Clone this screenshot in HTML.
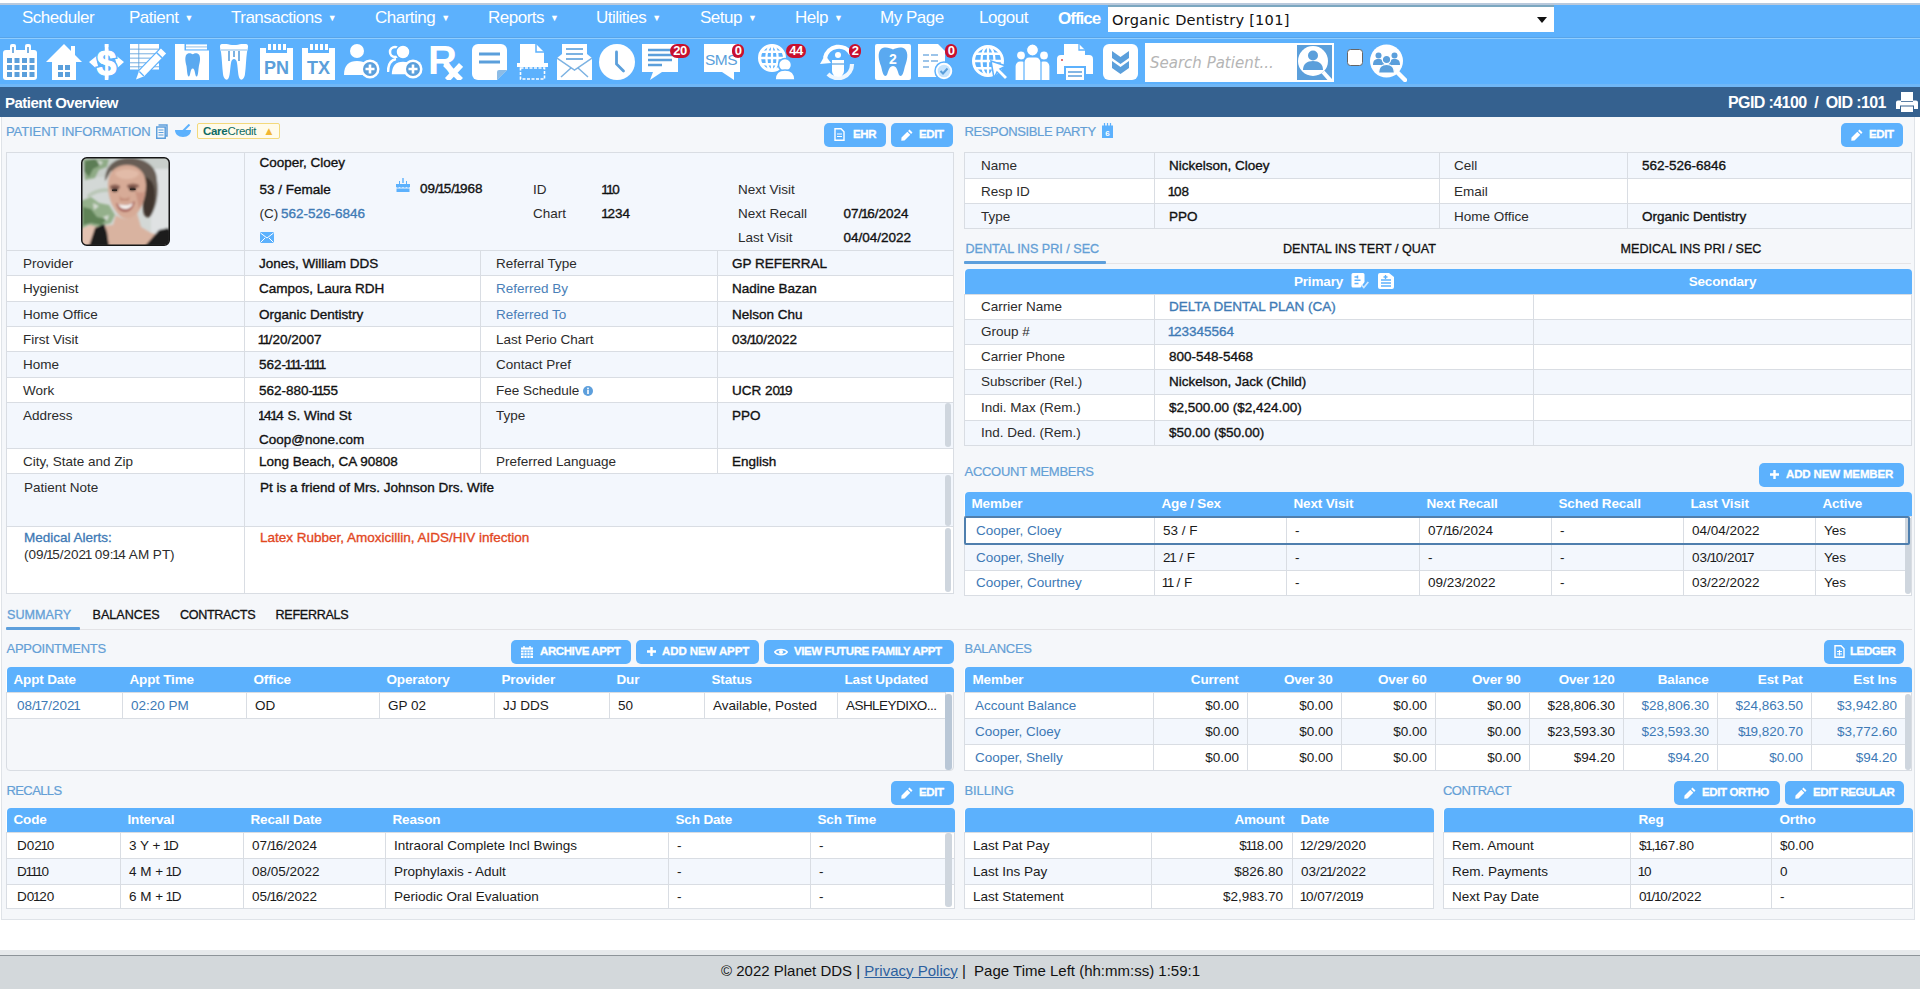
<!DOCTYPE html>
<html lang="en">
<head>
<meta charset="utf-8">
<title>Patient Overview</title>
<style>
*{box-sizing:border-box}
html,body{margin:0;padding:0}
body{width:1920px;height:989px;overflow:hidden;background:#fff;position:relative;font-family:"Liberation Sans",sans-serif;font-size:13.5px;color:#1f1f1f}
.abs{position:absolute}
#topline{left:0;top:3px;width:1920px;height:2px;background:#b9c9dc}
#menubar{left:0;top:5px;width:1920px;height:33px;background:#5cb1fd}
#menusep{left:0;top:37px;width:1920px;height:2px;background:linear-gradient(#58a4e8 0,#58a4e8 50%,#8fcdff 50%,#8fcdff 100%)}
#iconbar{left:0;top:39px;width:1920px;height:48px;background:#5cb1fd}
#iconstripe{left:0;top:84px;width:1920px;height:3px;background:#70b7f6}
#titlebar{left:0;top:87px;width:1920px;height:30px;background:#35618f}
.mi{position:absolute;top:0;height:32px;line-height:25px;font-size:17px;letter-spacing:-.5px;color:#fff;white-space:nowrap}
.mi i{font-style:normal;font-size:9px;letter-spacing:0;margin-left:6px;position:relative;top:-2px}
#office{left:1108px;top:-.5px;width:446px;height:27px;background:#fff;border-top:2px solid #7ba7c0;font-family:"DejaVu Sans",sans-serif;font-size:14.6px;letter-spacing:.22px;line-height:26px;padding-left:4px;color:#111}
#office b{position:absolute;right:7px;top:10px;width:0;height:0;border-left:5px solid transparent;border-right:5px solid transparent;border-top:6px solid #111}
.ic{position:absolute;top:6px;width:36px;height:36px}
.bdg{position:absolute;height:14px;border-radius:7px;background:#c8102e;color:#fff;font-weight:700;font-size:13px;line-height:14px;text-align:center;letter-spacing:-.5px}
#content{left:1px;top:117px;width:1914px;height:803px;background:#f5f7fa;border:1px solid #dfe3e8;border-top:0}
#footer{left:0;top:950px;width:1920px;height:39px;background:#d3d8db;border-top:5px solid #e6e9eb}
#footer .ln{position:absolute;left:0;top:0;width:1920px;height:1px;background:#8d9499}
#footer p{margin:0;position:absolute;left:721px;width:600px;top:6.5px;text-align:left;white-space:pre;font-size:15px;line-height:18px;color:#111}
#footer a{color:#2c5f9e;text-decoration:underline}
.sec{position:absolute;font-size:13px;color:#649fd6;white-space:nowrap;line-height:16px;letter-spacing:-.1px;-webkit-text-stroke:.2px}
.tab{position:absolute;font-size:12.6px;color:#111;white-space:nowrap;line-height:16px;-webkit-text-stroke:.3px}
.tab.on{color:#649fd6}
.btn{position:absolute;height:25px;border-radius:5px;background:#5cb1fd;color:#fff;-webkit-text-stroke:.3px #fff;font-weight:700;font-size:11.5px;line-height:25px;white-space:nowrap;letter-spacing:-.4px;text-align:left}
.btn svg{position:absolute;top:6px}
table{border-collapse:collapse;table-layout:fixed;position:absolute;background:#fff}
td,th{padding:0 0 0 8px;white-space:nowrap;overflow:hidden;text-align:left;font-weight:400;vertical-align:middle}
.g td{border:1px solid #d9dde3}
.g tr.a td{background:#f3f7fd}
.g tr.w td{background:#fff}
th{background:#5cb1fd;color:#fff;font-weight:700;font-size:13.5px;letter-spacing:-.15px}
.v{font-weight:400;color:#111}
.lk{color:#3d79b5}
.r{text-align:right;padding:0 5px 0 0}
.box{position:absolute;border:1px solid #d9dde3;border-radius:4px;background:#fff;overflow:hidden}
.sb{position:absolute;width:6px;border-radius:3px;background:#cfd6de}

.l{color:#2b2b2b}
td.l{padding-left:16px}
td.v{padding-left:14px}
.v{-webkit-text-stroke:.35px #111}
.lk2{color:#4a7fb8}
.lkv{color:#427cb6;-webkit-text-stroke:.35px #3d79b5}
.g{border-radius:4px}
.g tr.h th{border:0}
.pi td.l{padding-left:16px}
.am td,.ap td,.bl td,.rc td,.bi td,.ct td{color:#1a1a1a}
.g td.lk,.lk{color:#3d79b5}
.o{font-style:normal;margin:0 -1.3px}
.g tr.h th:first-child{border-radius:4px 0 0 0}.g tr.h th:last-child{border-radius:0 4px 0 0}
</style>
</head>
<body>
<div id="topline" class="abs"></div>
<div id="menubar" class="abs">
<span class="mi" style="left:22px">Scheduler</span>
<span class="mi" style="left:129px">Patient<i>▼</i></span>
<span class="mi" style="left:231px">Transactions<i>▼</i></span>
<span class="mi" style="left:375px">Charting<i>▼</i></span>
<span class="mi" style="left:488px">Reports<i>▼</i></span>
<span class="mi" style="left:596px">Utilities<i>▼</i></span>
<span class="mi" style="left:700px">Setup<i>▼</i></span>
<span class="mi" style="left:795px">Help<i>▼</i></span>
<span class="mi" style="left:880px">My Page</span>
<span class="mi" style="left:979px">Logout</span>
<span class="mi" style="left:1058px;top:1px;font-weight:700;letter-spacing:-1px">Office</span>
<div id="office" class="abs">Organic Dentistry [101]<b></b></div>
</div>
<div id="menusep" class="abs"></div>
<div id="iconbar" class="abs">
<svg class="ic" style="left:3px;top:5px;width:36px;height:36px" viewBox="0 0 36 36"><rect x="0" y="6" width="34" height="30" rx="3" fill="#fff"/><rect x="7" y="0" width="6" height="11" rx="2" fill="#fff"/><rect x="22" y="0" width="6" height="11" rx="2" fill="#fff"/><rect x="9.2" y="3" width="1.6" height="6" fill="#5b9fdb"/><rect x="24.2" y="3" width="1.6" height="6" fill="#5b9fdb"/><rect x="4.0" y="14" width="5" height="5" fill="#5b9fdb"/><rect x="11.5" y="14" width="5" height="5" fill="#5b9fdb"/><rect x="19.0" y="14" width="5" height="5" fill="#5b9fdb"/><rect x="26.5" y="14" width="5" height="5" fill="#5b9fdb"/><rect x="4.0" y="21" width="5" height="5" fill="#5b9fdb"/><rect x="11.5" y="21" width="5" height="5" fill="#5b9fdb"/><rect x="19.0" y="21" width="5" height="5" fill="#5b9fdb"/><rect x="26.5" y="21" width="5" height="5" fill="#5b9fdb"/><rect x="4.0" y="28" width="5" height="5" fill="#5b9fdb"/><rect x="11.5" y="28" width="5" height="5" fill="#5b9fdb"/><rect x="19.0" y="28" width="5" height="5" fill="#5b9fdb"/><rect x="26.5" y="28" width="5" height="5" fill="#5b9fdb"/></svg>
<svg class="ic" style="left:46px;top:5px;width:36px;height:36px" viewBox="0 0 36 36"><path fill="#fff" d="M18 0 L36 18 H30 V36 H6 V18 H0 Z M25 2 h4 v9 l-4 -4z"/><path fill="#5b9fdb" d="M12 21h5v5h-5zM19 21h5v5h-5zM12 28h5v5h-5zM19 28h5v5h-5z"/></svg>
<svg class="ic" style="left:89px;top:5px;width:36px;height:36px" viewBox="0 0 36 36"><path fill="#fff" d="M0 18 L10.500 9.500 L8 18 L10.500 27.500Z M35 18 L24.500 9.500 L27 18 L24.500 27.500Z"/><rect x="15.800" y="0" width="3.600" height="36" fill="#fff"/><text x="17.600" y="30.500" font-family="Liberation Sans,sans-serif" font-weight="700" font-size="35" text-anchor="middle" fill="#fff" stroke="#5cb1fd" stroke-width="4" paint-order="stroke">$</text><text x="17.600" y="30.500" font-family="Liberation Sans,sans-serif" font-weight="700" font-size="35" text-anchor="middle" fill="#fff" stroke="#fff" stroke-width="1">$</text><rect x="15.800" y="0" width="3.600" height="7" fill="#fff"/><rect x="15.800" y="30" width="3.600" height="6" fill="#fff"/></svg>
<svg class="ic" style="left:130px;top:5px;width:37px;height:36px" viewBox="0 0 37 36"><rect x="0" y="0" width="29" height="25.500" fill="#fff"/><rect x="0" y="4.5" width="29" height="1.400" fill="#5b9fdb" opacity=".6"/><rect x="0" y="9" width="29" height="1.400" fill="#5b9fdb" opacity=".6"/><rect x="0" y="13.5" width="29" height="1.400" fill="#5b9fdb" opacity=".6"/><rect x="0" y="18" width="29" height="1.400" fill="#5b9fdb" opacity=".6"/><rect x="0" y="22" width="29" height="1.400" fill="#5b9fdb" opacity=".6"/><rect x="8" y="0" width="1.400" height="25.500" fill="#5b9fdb" opacity=".6"/><path d="M6 35.500 L14.140 32.240 L36.090 9.500 L30.910 4.500 L8.960 27.240 Z" fill="#fff" stroke="#5cb1fd" stroke-width="2.400" stroke-linejoin="round"/><path d="M6 35.500 L14.140 32.240 L36.090 9.500 L30.910 4.500 L8.960 27.240 Z" fill="#fff"/><path d="M26.700 8.800 L31.900 13.800" stroke="#5cb1fd" stroke-width="1.500"/><path d="M9.300 27.500 L13.800 32" stroke="#5cb1fd" stroke-width="1.200"/></svg>
<svg class="ic" style="left:175px;top:5px;width:34px;height:36px" viewBox="0 0 34 36"><path fill="#fff" d="M0 0h9.500v6.500H34V36H0z"/><rect x="11" y=".4" width="21" height="5" fill="#fff"/><rect x="11" y="2.300" width="21" height="1.200" fill="#5b9fdb" opacity=".55"/><path fill="#5aa9f0" d="M11.500 10.500c2-2.200 4.500-1.300 6.200-.2c1.700-1.100 4.200-2 6.200.2c2 2.600 1 8 0 11.500c-.6 3.500-.6 10.500-2.300 10.500c-1.700 0-1.300-8-3.900-8s-2.200 8-3.900 8c-1.700 0-1.700-7-2.300-10.500c-1-3.500-2-8.900 0-11.500z"/></svg>
<svg class="ic" style="left:220px;top:5px;width:28px;height:36px" viewBox="0 0 28 36"><path fill="#fff" d="M2 0C-1 0 0 4 1 8c1 7 1 14 2 22c.5 4 3 7 5 5c2-2 2-10 3-16c.5-3 1.500-4 3-4s2.500 1 3 4c1 6 1 14 3 16c2 2 4.500-1 5-5c1-8 1-15 2-22c1-4 2-8-1-8c-3-1-7 1-12 1S5-1 2 0z"/><path d="M1 6h26" stroke="#5b9fdb" stroke-width="1.2" opacity=".6"/><path d="M9 7v10M14 7v6M19 7v10" stroke="#5b9fdb" stroke-width="1.6"/></svg>
<svg class="ic" style="left:260px;top:5px;width:33px;height:36px" viewBox="0 0 33 36"><path fill="#fff" d="M0 4h6v5h21V4h6v32H0z"/><rect x="8" y="0" width="3" height="6" fill="#fff"/><rect x="13" y="0" width="3" height="6" fill="#fff"/><rect x="18" y="0" width="3" height="6" fill="#fff"/><rect x="23" y="0" width="3" height="6" fill="#fff"/><text x="16.500" y="30" font-family="Liberation Sans,sans-serif" font-weight="700" font-size="18" text-anchor="middle" fill="#5b9fdb">PN</text></svg>
<svg class="ic" style="left:302px;top:5px;width:33px;height:36px" viewBox="0 0 33 36"><path fill="#fff" d="M0 4h6v5h21V4h6v32H0z"/><rect x="8" y="0" width="3" height="6" fill="#fff"/><rect x="13" y="0" width="3" height="6" fill="#fff"/><rect x="18" y="0" width="3" height="6" fill="#fff"/><rect x="23" y="0" width="3" height="6" fill="#fff"/><text x="16.500" y="30" font-family="Liberation Sans,sans-serif" font-weight="700" font-size="18" text-anchor="middle" fill="#5b9fdb">TX</text></svg>
<svg class="ic" style="left:344px;top:5px;width:36px;height:36px" viewBox="0 0 36 36"><circle cx="13" cy="7" r="7" fill="#fff"/><path fill="#fff" d="M0 31c0-10 5-14 13-14s13 4 13 14z"/><circle cx="26" cy="25" r="9.500" fill="#fff"/><circle cx="26" cy="25" r="7" fill="#5b9fdb"/><path d="M26 20.500v9M21.500 25h9" stroke="#fff" stroke-width="2.600"/></svg>
<svg class="ic" style="left:387px;top:5px;width:36px;height:36px" viewBox="0 0 36 36"><circle cx="8" cy="8" r="5" fill="none" stroke="#fff" stroke-width="2.500"/><path d="M1 28c0-8 3-12 8-13" fill="none" stroke="#fff" stroke-width="2.500"/><circle cx="16" cy="8" r="7" fill="#fff" stroke="#5cb1fd" stroke-width="1.500"/><path fill="#fff" stroke="#5cb1fd" stroke-width="1.500" d="M4 31c0-10 5-14 12-14s12 4 12 14z"/><circle cx="26" cy="25" r="9.500" fill="#fff"/><circle cx="26" cy="25" r="7" fill="#5b9fdb"/><path d="M26 20.500v9M21.500 25h9" stroke="#fff" stroke-width="2.600"/></svg>
<svg class="ic" style="left:429px;top:5px;width:34px;height:36px" viewBox="0 0 34 36"><text x="-1" y="30" font-family="Liberation Sans,sans-serif" font-weight="700" font-size="40" fill="#fff" letter-spacing="-2">R</text><path d="M16 20 L32 36 M32 21 L18 36" stroke="#fff" stroke-width="5.500"/></svg>
<svg class="ic" style="left:472px;top:5px;width:35px;height:36px" viewBox="0 0 35 36"><path fill="#fff" d="M6 0h23a6 6 0 0 1 6 6v20l-10 10H6a6 6 0 0 1-6-6V6a6 6 0 0 1 6-6z"/><path fill="#5b9fdb" d="M25 36v-8a2 2 0 0 1 2-2h8z" opacity=".7"/><path d="M7 10h21M7 18h21" stroke="#5b9fdb" stroke-width="3"/></svg>
<svg class="ic" style="left:517px;top:5px;width:31px;height:36px" viewBox="0 0 31 36"><path fill="#fff" d="M3 0h16l8 8v14H3z"/><path d="M19 0v8h8" fill="none" stroke="#5cb1fd" stroke-width="1.500"/><rect x="0" y="19" width="31" height="4" fill="#fff"/><rect x="3.500" y="24" width="24" height="11" fill="none" stroke="#fff" stroke-width="1.600" stroke-dasharray="3 1.500"/></svg>
<svg class="ic" style="left:557px;top:5px;width:35px;height:36px" viewBox="0 0 35 36"><path fill="#fff" d="M0 14l5-4v-10h25v10l5 4v22H0z"/><path d="M9 5h17M9 10h17M9 15h17" stroke="#5b9fdb" stroke-width="1.800" opacity=".8"/><path d="M0 14l17.500 12L35 14" fill="none" stroke="#5b9fdb" stroke-width="1.500" opacity=".8"/><path d="M4 33l10-9M31 33l-10-9" stroke="#5b9fdb" stroke-width="1.500" opacity=".8"/></svg>
<svg class="ic" style="left:599px;top:5px;width:36px;height:36px" viewBox="0 0 36 36"><circle cx="18" cy="18" r="18" fill="#fff"/><path d="M17.500 8v12l7 7" fill="none" stroke="#5b9fdb" stroke-width="2.800" stroke-linecap="round"/></svg>
<svg class="ic" style="left:642px;top:5px;width:36px;height:36px" viewBox="0 0 36 36"><path fill="#fff" d="M0 0h36v28H20l-12 8 3-8H0z"/><path d="M6 6h24M6 11h24M6 16h24M6 21h14" stroke="#5b9fdb" stroke-width="2.600"/></svg>
<svg class="ic" style="left:704px;top:5px;width:36px;height:36px" viewBox="0 0 36 36"><path fill="#fff" d="M0 0h36v28H30v8l-12-8H0z"/><text x="17" y="21" font-family="Liberation Sans,sans-serif" font-size="15.500" text-anchor="middle" fill="#5b9fdb" letter-spacing="-.5">SMS</text></svg>
<svg class="ic" style="left:758px;top:5px;width:37px;height:36px" viewBox="0 0 37 36"><circle cx="14" cy="14" r="12.5" fill="none" stroke="#fff" stroke-width="3"/><ellipse cx="14" cy="14" rx="5.625" ry="12.5" fill="none" stroke="#fff" stroke-width="2.300"/><path d="M1.5 14h25.0M14 1.5v25.0M3.375 7.75h21.25M3.375 20.25h21.25" stroke="#fff" stroke-width="2.300"/><circle cx="27" cy="21" r="6.500" fill="#fff" stroke="#5cb1fd" stroke-width="1.500"/><path fill="#fff" stroke="#5cb1fd" stroke-width="1.500" d="M17 36c0-7 4-10 10-10s10 3 10 10z"/></svg>
<svg class="ic" style="left:820px;top:5px;width:36px;height:36px" viewBox="0 0 36 36"><path d="M5 14A14 14 0 0 1 31 10" fill="none" stroke="#fff" stroke-width="4.200"/><path d="M32 20A14 14 0 0 1 8 30" fill="none" stroke="#fff" stroke-width="4.200" opacity=".9"/><path fill="#fff" d="M0 20l5-9 6 8z"/><path fill="#fff" d="M12 16h12v11a6 6 0 0 1-12 0z"/><circle cx="18" cy="11" r="3" fill="#fff"/><path d="M12 20h12" stroke="#5b9fdb" stroke-width="1.200"/></svg>
<svg class="ic" style="left:875px;top:5px;width:36px;height:36px" viewBox="0 0 36 36"><rect x="0" y="0" width="36" height="36" rx="2" fill="#fff"/><path fill="#5aa9f0" d="M6 5c4-3 9-1 12 .5c3-1.500 8-3.500 12-.5c4 4 2 12 0 17c-1 4-2 10-4.500 10c-3 0-2-10-7.500-10s-4.500 10-7.500 10c-2.500 0-3.500-6-4.500-10c-2-5-4-13 0-17z"/><text x="18" y="20" font-family="Liberation Sans,sans-serif" font-weight="700" font-size="14" text-anchor="middle" fill="#fff">2</text></svg>
<svg class="ic" style="left:918px;top:5px;width:36px;height:36px" viewBox="0 0 36 36"><path fill="#fff" d="M0 0h20l7 7v26H0z"/><path d="M5 11h6M13 11h7M5 17h6M13 17h7M5 23h6" stroke="#5b9fdb" stroke-width="1.600" opacity=".8"/><circle cx="26" cy="27" r="9" fill="#fff" stroke="#5cb1fd" stroke-width="1.500"/><circle cx="26" cy="27" r="6.300" fill="#5cb1fd" opacity=".35"/><path d="M22.500 27l2.500 2.500 4.500-5" fill="none" stroke="#5b9fdb" stroke-width="2"/></svg>
<svg class="ic" style="left:972px;top:5px;width:36px;height:36px" viewBox="0 0 36 36"><circle cx="16" cy="17" r="14.5" fill="none" stroke="#fff" stroke-width="3"/><ellipse cx="16" cy="17" rx="6.525" ry="14.5" fill="none" stroke="#fff" stroke-width="2.300"/><path d="M1.5 17h29.0M16 2.5v29.0M3.6750000000000007 9.75h24.65M3.6750000000000007 24.25h24.65" stroke="#fff" stroke-width="2.300"/><path fill="#fff" stroke="#5cb1fd" stroke-width="1.500" d="M19 17l15 5-6 3 8 8-3 3-8-8-3 6z"/></svg>
<svg class="ic" style="left:1015px;top:5px;width:35px;height:36px" viewBox="0 0 35 36"><circle cx="6" cy="11.5" r="4.5" fill="#fff" stroke="#5cb1fd" stroke-width="1.200"/><path fill="#fff" stroke="#5cb1fd" stroke-width="1.200" d="M0.0 37V22.0a5 5 0 0 1 5-5h2a5 5 0 0 1 5 5V37z"/><circle cx="29" cy="11.5" r="4.5" fill="#fff" stroke="#5cb1fd" stroke-width="1.200"/><path fill="#fff" stroke="#5cb1fd" stroke-width="1.200" d="M23.0 37V22.0a5 5 0 0 1 5-5h2a5 5 0 0 1 5 5V37z"/><circle cx="17.5" cy="6" r="6" fill="#fff" stroke="#5cb1fd" stroke-width="1.200"/><path fill="#fff" stroke="#5cb1fd" stroke-width="1.200" d="M9.0 37V18a5 5 0 0 1 5-5h7a5 5 0 0 1 5 5V37z"/></svg>
<svg class="ic" style="left:1057px;top:5px;width:36px;height:36px" viewBox="0 0 36 36"><path fill="#fff" d="M7 0h15l6 6v9H7z"/><path d="M22 0v6h6" fill="none" stroke="#5cb1fd" stroke-width="1.300"/><path fill="#fff" d="M4 11h28a4 4 0 0 1 4 4v15h-7v-8H7v8H0V15a4 4 0 0 1 4-4z"/><rect x="9" y="24" width="18" height="12" fill="#fff"/><path d="M11 28h14M11 32h14" stroke="#5b9fdb" stroke-width="1.600"/><circle cx="5" cy="16" r="1" fill="#d44"/></svg>
<svg class="ic" style="left:1103px;top:5px;width:35px;height:36px" viewBox="0 0 35 36"><rect x="0" y="0" width="35" height="36" rx="6" fill="#fff"/><path fill="#5b9fdb" d="M9 7l8.500 6 8.500-6v7l-8.500 6L9 14zM9 17l8.500 6 8.500-6v7l-8.500 6L9 24z"/></svg>
<div class="abs" style="left:1145px;top:4px;width:189px;height:39px;background:#fff"></div>
<span class="abs" style="left:1150px;top:13.5px;font-family:'DejaVu Sans',sans-serif;font-style:italic;font-size:15px;line-height:20px;color:#b5b5b5;white-space:nowrap">Search Patient...</span>
<svg class="abs" style="left:1297px;top:6px" width="35" height="35" viewBox="0 0 35 35"><rect width="35" height="35" fill="#5b9fdb"/><circle cx="16" cy="16" r="15" fill="#fff"/><path d="M26 27l8 9" stroke="#fff" stroke-width="4"/><circle cx="16" cy="10.500" r="5" fill="#5b9fdb"/><path fill="#5b9fdb" d="M6 25c0-6 4-9 10-9s10 3 10 9z"/></svg>
<div class="abs" style="left:1347px;top:10px;width:16px;height:17px;background:#fff;border:1.700px solid #666;border-radius:3.500px"></div>
<svg class="abs" style="left:1370px;top:5px" width="37" height="38" viewBox="0 0 37 38"><circle cx="16.500" cy="17" r="16.500" fill="#fff"/><path d="M27 28l8 8" stroke="#fff" stroke-width="4.500" stroke-linecap="round"/><g fill="#5b9fdb"><circle cx="8.500" cy="11.500" r="3"/><path d="M3 21c0-4.500 2-6 5.500-6s5.500 1.500 5.500 6z"/><circle cx="24.500" cy="11.500" r="3"/><path d="M19 21c0-4.500 2-6 5.500-6s5.500 1.500 5.500 6z"/><circle cx="16.500" cy="15.500" r="4.200" stroke="#fff" stroke-width="1.200"/><path stroke="#fff" stroke-width="1.200" d="M8.500 29c0-6 3-8.500 8-8.500s8 2.500 8 8.500z"/></g></svg>
<span class="bdg" style="left:670px;top:5px;width:20px">20</span><span class="bdg" style="left:732px;top:5px;width:12px">0</span><span class="bdg" style="left:786px;top:5px;width:20px">44</span><span class="bdg" style="left:849px;top:5px;width:12px">2</span><span class="bdg" style="left:945px;top:5px;width:12px">0</span>
</div>
<div id="iconstripe" class="abs"></div>
<div id="titlebar" class="abs">
<span class="abs" style="left:5px;top:7px;font-size:15px;font-weight:700;letter-spacing:-.5px;color:#fff;line-height:18px">Patient Overview</span>
<span class="abs" style="left:1728px;top:6px;font-size:16px;font-weight:700;letter-spacing:-.6px;color:#fff;line-height:19px;white-space:pre">PGID :4100  /  OID :101</span>
<svg class="abs" style="left:1896px;top:5px" width="22" height="20" viewBox="0 0 22 20"><path fill="#fff" d="M5 0h12v9H5z M2 8.500h18a2 2 0 0 1 2 2V17h-4v-3.500H4V17H0v-6.500a2 2 0 0 1 2-2z M5 14.500h12V20H5z"/><path fill="#35618f" d="M5 9h12v.8H5z"/></svg>
</div>
<div id="content" class="abs">
<div class="abs" style="left:-2px;top:0;width:1920px;height:0">
<div class="sec" style="left:6px;top:6.5px">PATIENT INFORMATION</div>
<svg class="abs" style="left:156px;top:7px" width="12" height="15" viewBox="0 0 12 15"><path fill="none" stroke="#5d9fdc" stroke-width="1.500" d="M2.500 1h8.500v11h-2M.7 3h8.500v11.300H.7z"/><path stroke="#5d9fdc" stroke-width="1.100" d="M2.500 6h5M2.500 8.500h5M2.500 11h5"/></svg>
<svg class="abs" style="left:175px;top:7px" width="16" height="14" viewBox="0 0 16 14"><path fill="#5cb1fd" d="M0 6h16c0 4-3 7-8 7S0 10 0 6z"/><path stroke="#5cb1fd" stroke-width="2" d="M14.500.5L8 7"/></svg>
<div class="abs" style="left:197px;top:6px;width:83px;height:16px;border:1px solid #f3d97c;border-radius:2px;background:#fffbea;font-size:11.500px;line-height:14px;padding-left:5px;color:#0f6b64;white-space:nowrap;letter-spacing:-.3px"><b>Care</b>Credit<span style="color:#f2b632;font-size:11.500px;margin-left:7px;position:relative;top:0">▲</span></div>
<div class="btn" style="left:824px;top:5.5px;width:62px;height:24px;line-height:23px;padding-left:29px"><svg width="11" height="13" viewBox="0 0 11 13" style="left:10px;top:5px"><path fill="none" stroke="#fff" stroke-width="1.400" d="M1 .7h6l3 3v8.600H1z"/><path stroke="#fff" stroke-width="1.100" d="M3 6h5M3 8.500h5"/></svg>EHR</div>
<div class="btn" style="left:891px;top:5.5px;width:62px;height:24px;line-height:23px;padding-left:28px"><svg width="12" height="12" viewBox="0 0 12 12" style="left:10px"><path fill="#fff" d="M8.500.5l3 3-1.400 1.400-3-3zM6.300 2.700l3 3L3.500 11.500.3 11.700.5 8.500z"/></svg>EDIT</div>
<table class="g pi" style="left:6px;top:35px;width:947px;"><colgroup><col style="width:238px"><col style="width:236px"><col style="width:237px"><col style="width:236px"></colgroup><tr class="a" style="height:98px"><td></td><td colspan="3"></td></tr><tr class="a" style="height:25px"><td class="l">Provider</td><td class="v">Jones, William DDS</td><td class="l" style="padding-left:15px">Referral Type</td><td class="v">GP REFERRAL</td></tr><tr class="w" style="height:26px"><td class="l">Hygienist</td><td class="v">Campos, Laura RDH</td><td class="l" style="padding-left:15px"><span class="lk2">Referred By</span></td><td class="v">Nadine Bazan</td></tr><tr class="a" style="height:25px"><td class="l">Home Office</td><td class="v">Organic Dentistry</td><td class="l" style="padding-left:15px"><span class="lk2">Referred To</span></td><td class="v">Nelson Chu</td></tr><tr class="w" style="height:25px"><td class="l">First Visit</td><td class="v"><i class="o">1</i><i class="o">1</i>/20/2007</td><td class="l" style="padding-left:15px">Last Perio Chart</td><td class="v">03/<i class="o">1</i>0/2022</td></tr><tr class="a" style="height:26px"><td class="l">Home</td><td class="v">562-<i class="o">1</i><i class="o">1</i><i class="o">1</i>-<i class="o">1</i><i class="o">1</i><i class="o">1</i><i class="o">1</i></td><td class="l" style="padding-left:15px">Contact Pref</td><td class="v"></td></tr><tr class="w" style="height:25px"><td class="l">Work</td><td class="v">562-880-<i class="o">1</i><i class="o">1</i>55</td><td class="l" style="padding-left:15px">Fee Schedule <svg width="10" height="10" viewBox="0 0 10 10" style="vertical-align:-1px"><circle cx="5" cy="5" r="5" fill="#5d9fdc"/><rect x="4.200" y="4" width="1.600" height="4" fill="#fff"/><circle cx="5" cy="2.500" r=".9" fill="#fff"/></svg></td><td class="v">UCR 20<i class="o">1</i>9</td></tr><tr class="a" style="height:46px"><td class="l" style="vertical-align:top;padding-top:5px">Address</td><td class="v" style="vertical-align:top;padding-top:0"><div style="height:44px;overflow:hidden;line-height:24px;margin-top:1px"><i class="o">1</i>4<i class="o">1</i>4 S. Wind St<br>Coop@none.com</div></td><td class="l" style="vertical-align:top;padding-top:5px;padding-left:15px">Type</td><td class="v" style="vertical-align:top;padding-top:5px">PPO</td></tr><tr class="w" style="height:25px"><td class="l">City, State and Zip</td><td class="v">Long Beach, CA 90808</td><td class="l" style="padding-left:15px">Preferred Language</td><td class="v">English</td></tr><tr class="a" style="height:53px"><td class="l" style="vertical-align:top;padding:6px 0 0 17px">Patient Note</td><td class="v" style="vertical-align:top;padding:6px 0 0 15px" colspan="3">Pt is a friend of Mrs. Johnson Drs. Wife</td></tr><tr class="w" style="height:67px"><td class="l" style="vertical-align:top;padding:2px 0 0 17px;line-height:17px"><span style="color:#3d79b5;-webkit-text-stroke:.3px #3d79b5">Medical Alerts:</span><br>(09/<i class="o">1</i>5/202<i class="o">1</i> 09:<i class="o">1</i>4 AM PT)</td><td class="v" style="vertical-align:top;padding:2px 0 0 15px;line-height:17px;color:#e2481f;-webkit-text-stroke:.35px #e2481f" colspan="3">Latex Rubber, Amoxicillin, AIDS/HIV infection</td></tr></table>
<svg class="abs" style="left:81px;top:40px" width="89" height="89" viewBox="0 0 89 89"><defs><clipPath id="pc"><rect x="1" y="1" width="87" height="87" rx="5"/></clipPath><filter id="pb" x="-10%" y="-10%" width="120%" height="120%"><feGaussianBlur stdDeviation="1.1"/></filter><filter id="pb2" x="-10%" y="-10%" width="120%" height="120%"><feGaussianBlur stdDeviation=".6"/></filter></defs><g clip-path="url(#pc)"><rect width="89" height="89" fill="#d3d8d6"/><g filter="url(#pb)"><path fill="#c9cfcb" d="M0 0h89v20H0z"/><path fill="#dfe2e3" d="M70 12h19v66H70z"/><path fill="#8fab86" d="M2 2h26l-2 8-8 3-4 8-10 2z"/><path fill="#5c7d55" d="M4 4l10-2 6 6-8 4-4 8-5-6z"/><path fill="#cfd8cc" d="M16 3l6 2-3 4z"/><path fill="#94b08b" d="M0 44l10-4 8 6 10 2 6 10-4 8-14 4-8-2-8 4z"/><path fill="#5f8257" d="M2 50l8 2 6 8 10 2-6 6-10-2-8 2z"/><path fill="#d5dcd3" d="M12 46l6 3-5 4zM22 60l6-2-2 6z"/><path fill="#b9c6b6" d="M6 38c8-6 16-8 24-6l-1 3c-8-1-14 1-22 6z"/><path fill="#675d54" d="M24 24C24 8 34 1 48 1c16 0 28 8 28 22 2 12 0 26-6 36-4 4-8 0-8-6L60 22 30 14z"/><path fill="#3f352e" d="M62 20c8 0 12 8 12 18s-3 20-7 22c-4 0-5-8-5-16z"/><path fill="#d7ab97" d="M27 28C27 14 35 8 46 8s19 7 19 20c0 14-5 24-10 30-4 5-12 5-17 0-6-7-11-16-11-30z"/><path fill="#e2bba8" d="M34 16c6-5 18-5 24 0-2 8-22 8-24 0z"/><path fill="#c48f7c" d="M38 38c1 4 8 5 11 1l-1 5h-9z"/><path fill="#8a5f53" d="M29 29c3-2 7-2 10 0v2.500c-3-1-7-1-10 0zM46 28c4-2 8-2 12 0v2.500c-4-1-8-1-12 0z"/><path fill="#4a342e" d="M30.500 31.500c2-1 5-1 7 0l-1 3c-2 1-4 1-5.500 0zM47.500 30.500c2-1 6-1 8 0l-1 3c-2 1-4.500 1-6 0z"/><path fill="#c99482" d="M54 34c4 2 8 2 10 0-1 8-3 14-6 18-1-6-2-12-4-18z"/><path fill="#a8645c" d="M35 46c5 3 14 2 19-2-1 8-6 11-10 11-5 0-8-4-9-9z"/><path fill="#f4efec" d="M37 47c5 2 11 1 15-1-1 4-4 6-8 6-3 0-6-2-7-5z"/><path fill="#d9b3a0" d="M35 58c5 5 15 5 21-2l4 14 10 6 19 4v9H0V76l10-6 22-2z"/><path fill="#e3c2b1" d="M0 72l10-4 4 2-6 18H0z"/><path fill="#1b1b1e" d="M8 89l6-18 9-4 3 8 2 14zM64 89l14-16 9-2 2 2v16z"/></g><g filter="url(#pb2)"><path fill="#2e2622" d="M31 32.500h5v1.400h-5zM49 31.500h5.500v1.400H49z"/></g></g><rect x=".75" y=".75" width="87.500" height="87.500" rx="5" fill="none" stroke="#161616" stroke-width="1.500"/></svg>
<span class="abs v" style="left:259.5px;top:38px;line-height:16px;white-space:nowrap;">Cooper, Cloey</span>
<span class="abs v" style="left:259.5px;top:64.5px;line-height:16px;white-space:nowrap;">53 / Female</span>
<span class="abs l" style="left:259.5px;top:88.5px;line-height:16px;white-space:nowrap;">(C)&thinsp;<span class="lkv">562-526-6846</span></span>
<svg class="abs" style="left:260px;top:115px" width="14" height="11" viewBox="0 0 14 11"><rect width="14" height="11" rx="1" fill="#5cb1fd"/><path d="M.5 1l6.500 5 6.500-5M.5 10.500l4.500-4.500M13.500 10.500L9 6" fill="none" stroke="#fff" stroke-width="1"/></svg>
<svg class="abs" style="left:396px;top:61px" width="14" height="15" viewBox="0 0 14 15"><path fill="#5cb1fd" d="M6.300 0h1.400v5H6.300zM3 3h1v3H3zM10 3h1v3h-1zM0 6h14v3c-1.200 1-2.300 1-3.500 0-1.200 1-2.300 1-3.500 0-1.200 1-2.300 1-3.500 0C2.300 10 1.200 10 0 9zM.5 10.500h13V14H.5z"/></svg>
<span class="abs v" style="left:420px;top:64px;line-height:16px;white-space:nowrap;">09/<i class="o">1</i>5/<i class="o">1</i>968</span>
<span class="abs l" style="left:533px;top:64.5px;line-height:16px;white-space:nowrap;">ID</span>
<span class="abs v" style="left:602.5px;top:64.5px;line-height:16px;white-space:nowrap;"><i class="o">1</i><i class="o">1</i>0</span>
<span class="abs l" style="left:533px;top:88.5px;line-height:16px;white-space:nowrap;">Chart</span>
<span class="abs v" style="left:602.5px;top:88.5px;line-height:16px;white-space:nowrap;"><i class="o">1</i>234</span>
<span class="abs l" style="left:738px;top:64.5px;line-height:16px;white-space:nowrap;">Next Visit</span>
<span class="abs l" style="left:738px;top:88.5px;line-height:16px;white-space:nowrap;">Next Recall</span>
<span class="abs v" style="left:843.5px;top:88.5px;line-height:16px;white-space:nowrap;">07/<i class="o">1</i>6/2024</span>
<span class="abs l" style="left:738px;top:112.5px;line-height:16px;white-space:nowrap;">Last Visit</span>
<span class="abs v" style="left:843.5px;top:112.5px;line-height:16px;white-space:nowrap;">04/04/2022</span>
<div class="sb" style="left:945px;top:286px;height:44px"></div>
<div class="sb" style="left:945px;top:358px;height:51px"></div>
<div class="sb" style="left:945px;top:411px;height:64px"></div>
<div class="sec" style="left:964.5px;top:6.5px;letter-spacing:-0.37px">RESPONSIBLE PARTY</div>
<svg class="abs" style="left:1102px;top:6px" width="11" height="15" viewBox="0 0 11 15"><path fill="#5cb1fd" d="M0 2.500h11V15H0z"/><path stroke="#5cb1fd" stroke-width="1.200" d="M2.500 0v3M5.500 0v3M8.500 0v3"/><text x="5.500" y="12.500" font-size="8" font-weight="700" fill="#fff" text-anchor="middle" font-family="Liberation Sans,sans-serif">6</text></svg>
<div class="btn" style="left:1841px;top:5.5px;width:62px;height:24px;line-height:23px;padding-left:28px"><svg width="12" height="12" viewBox="0 0 12 12" style="left:10px"><path fill="#fff" d="M8.500.5l3 3-1.400 1.400-3-3zM6.300 2.700l3 3L3.500 11.500.3 11.700.5 8.500z"/></svg>EDIT</div>
<table class="g rp" style="left:964px;top:35px;width:947px;"><colgroup><col style="width:190px"><col style="width:285px"><col style="width:188px"><col style="width:284px"></colgroup><tr class="a" style="height:26px"><td class="l">Name</td><td class="v">Nickelson, Cloey</td><td class="l" style="padding-left:14px">Cell</td><td class="v">562-526-6846</td></tr><tr class="w" style="height:25px"><td class="l">Resp ID</td><td class="v"><i class="o">1</i>08</td><td class="l" style="padding-left:14px">Email</td><td class="v"></td></tr><tr class="a" style="height:25px"><td class="l">Type</td><td class="v">PPO</td><td class="l" style="padding-left:14px">Home Office</td><td class="v">Organic Dentistry</td></tr></table>
<div class="abs" style="left:964px;top:146px;width:947px;height:1px;background:#e6e4e6"></div>
<div class="abs" style="left:964px;top:144px;width:142px;height:3px;background:#5d9fdc;border-radius:1px"></div>
<div class="tab on" style="left:965.5px;top:123.5px">DENTAL INS PRI / SEC</div>
<div class="tab" style="left:1283px;top:123.5px">DENTAL INS TERT / QUAT</div>
<div class="tab" style="left:1620.5px;top:123.5px">MEDICAL INS PRI / SEC</div>
<table class="g ins" style="left:964px;top:152px;width:947px;"><colgroup><col style="width:190px"><col style="width:379px"><col style="width:378px"></colgroup><tr class="h" style="height:25px"><th style="border-radius:4px 0 0 0"></th><th style="text-align:center;padding:0">Primary<svg width="18" height="16" viewBox="0 0 18 16" style="vertical-align:-3px;margin-left:8px"><path fill="#fff" d="M2 0h10a1.500 1.500 0 0 1 1.500 1.500V9l-4 5.500H2A1.500 1.500 0 0 1 .5 13V1.500A1.500 1.500 0 0 1 2 0z"/><path stroke="#5cb1fd" stroke-width="1.500" d="M3.500 4h3M3.500 7.300h6M3.500 10.600h4M6.500 2.500v3"/><path fill="none" stroke="#cfe8ff" stroke-width="1.700" d="M10.500 12l2.300 2.500 4.500-5.500"/></svg><svg width="16" height="16" viewBox="0 0 16 16" style="vertical-align:-3px;margin-left:9px"><path fill="#fff" d="M2 0h9l5 4v10a2 2 0 0 1-2 2H2a2 2 0 0 1-2-2V2a2 2 0 0 1 2-2z"/><path stroke="#5cb1fd" stroke-width="1.300" d="M3 7h10M3 10h10M3 13h10M7.500 2v4M5.500 4h4"/></svg></th><th style="text-align:center;padding:0;border-radius:0 4px 0 0">Secondary</th></tr><tr class="w" style="height:25px"><td class="l">Carrier Name</td><td class="v lkv">DELTA DENTAL PLAN (CA)</td><td></td></tr><tr class="a" style="height:25px"><td class="l">Group #</td><td class="v lkv"><i class="o">1</i>23345564</td><td></td></tr><tr class="w" style="height:25px"><td class="l">Carrier Phone</td><td class="v">800-548-5468</td><td></td></tr><tr class="a" style="height:25px"><td class="l">Subscriber (Rel.)</td><td class="v">Nickelson, Jack (Child)</td><td></td></tr><tr class="w" style="height:26px"><td class="l">Indi. Max (Rem.)</td><td class="v">$2,500.00 ($2,424.00)</td><td></td></tr><tr class="a" style="height:25px"><td class="l">Ind. Ded. (Rem.)</td><td class="v">$50.00 ($50.00)</td><td></td></tr></table>
<div class="sec" style="left:964.5px;top:347.0px;letter-spacing:-0.28px">ACCOUNT MEMBERS</div>
<div class="btn" style="left:1759px;top:346px;width:145px;height:24px;line-height:23px;padding-left:27px"><svg width="11" height="11" viewBox="0 0 11 11" style="left:10px;top:6px"><path stroke="#fff" stroke-width="2.400" d="M5.500 1v9M1 5.500h9"/></svg><span style="letter-spacing:-.15px">ADD NEW MEMBER</span></div>
<table class="g am" style="left:964px;top:375px;width:947px;"><colgroup><col style="width:190px"><col style="width:132px"><col style="width:133px"><col style="width:132px"><col style="width:132px"><col style="width:132px"><col style="width:96px"></colgroup><tr class="h" style="height:24px"><th style="padding-left:7px">Member</th><th style="padding-left:7px">Age / Sex</th><th style="padding-left:7px">Next Visit</th><th style="padding-left:7px">Next Recall</th><th style="padding-left:7px">Sched Recall</th><th style="padding-left:7px">Last Visit</th><th style="padding-left:7px">Active</th></tr><tr class="w sel" style="height:28px"><td class="lk" style="padding-left:11px">Cooper, Cloey</td><td>53 / F</td><td>-</td><td>07/<i class="o">1</i>6/2024</td><td>-</td><td>04/04/2022</td><td>Yes</td></tr><tr class="a" style="height:26px"><td class="lk" style="padding-left:11px">Cooper, Shelly</td><td>2<i class="o">1</i> / F</td><td>-</td><td>-</td><td>-</td><td>03/<i class="o">1</i>0/20<i class="o">1</i>7</td><td>Yes</td></tr><tr class="w" style="height:25px"><td class="lk" style="padding-left:11px">Cooper, Courtney</td><td><i class="o">1</i><i class="o">1</i> / F</td><td>-</td><td>09/23/2022</td><td>-</td><td>03/22/2022</td><td>Yes</td></tr></table>
<div class="sb" style="left:1904.500px;top:401px;height:76px;width:6px;border-radius:0 0 3px 3px"></div>
<div class="abs" style="left:964px;top:399px;width:946px;height:29px;border:2px solid #4f7fae;border-radius:2px"></div>
<div class="abs" style="left:6px;top:512px;width:1906px;height:1px;background:#e3e3e6"></div>
<div class="abs" style="left:6px;top:510px;width:74px;height:3px;background:#5d9fdc;border-radius:1px"></div>
<div class="tab on" style="left:7px;top:490px">SUMMARY</div>
<div class="tab" style="left:92.5px;top:490px">BALANCES</div>
<div class="tab" style="left:180px;top:490px"><span style="letter-spacing:-.35px">CONTRACTS</span></div>
<div class="tab" style="left:275.5px;top:490px"><span style="letter-spacing:-.3px">REFERRALS</span></div>
<div class="sec" style="left:6.5px;top:524.0px;letter-spacing:-0.26px">APPOINTMENTS</div>
<div class="btn" style="left:511px;top:523px;width:120px;height:24px;line-height:23px;padding-left:29px"><svg width="12" height="12" viewBox="0 0 12 12" style="left:10px;top:6px"><path fill="#fff" d="M0 1.500h12V12H0z"/><path stroke="#fff" stroke-width="1.400" d="M3 0v2M9 0v2"/><path stroke="#5cb1fd" stroke-width=".8" d="M0 4h12M0 6.700h12M0 9.400h12M3 4v8M6 4v8M9 4v8"/></svg>ARCHIVE APPT</div>
<div class="btn" style="left:636px;top:523px;width:123px;height:24px;line-height:23px;padding-left:26px"><svg width="11" height="11" viewBox="0 0 11 11" style="left:10px;top:6px"><path stroke="#fff" stroke-width="2.400" d="M5.500 1v9M1 5.500h9"/></svg><span style="letter-spacing:-.1px">ADD NEW APPT</span></div>
<div class="btn" style="left:764px;top:523px;width:190px;height:24px;line-height:23px;padding-left:30px"><svg width="14" height="10" viewBox="0 0 14 10" style="left:10px;top:7px"><path fill="none" stroke="#fff" stroke-width="1.500" d="M.8 5C3 1.500 11 1.500 13.200 5 11 8.500 3 8.500.8 5z"/><circle cx="7" cy="5" r="2" fill="#fff"/></svg>VIEW FUTURE FAMILY APPT</div>
<div class="box" style="left:6px;top:550px;width:948px;height:104px;background:#f5f7fa"></div>
<table class="g ap" style="left:6px;top:550px;width:939px;"><colgroup><col style="width:116px"><col style="width:124px"><col style="width:133px"><col style="width:115px"><col style="width:115px"><col style="width:95px"><col style="width:133px"><col style="width:108px"></colgroup><tr class="h" style="height:25px"><th style="padding-left:7px">Appt Date</th><th style="padding-left:7px">Appt Time</th><th style="padding-left:7px">Office</th><th style="padding-left:7px">Operatory</th><th style="padding-left:7px">Provider</th><th style="padding-left:7px">Dur</th><th style="padding-left:7px">Status</th><th style="padding-left:7px">Last Updated</th></tr><tr class="w" style="height:26px"><td class="lk" style="padding-left:10px">08/<i class="o">1</i>7/202<i class="o">1</i></td><td class="lk">02:20 PM</td><td>OD</td><td>GP 02</td><td>JJ DDS</td><td>50</td><td>Available, Posted</td><td style="letter-spacing:-.55px">ASHLEYDIXO...</td></tr></table>
<div class="abs" style="left:939px;top:550px;width:15px;height:25px;background:#5cb1fd;border-radius:0 4px 0 0"></div>
<div class="sb" style="left:945px;top:577px;height:76px;width:7px;background:#b9c7d6"></div>
<div class="sec" style="left:964.5px;top:524.0px;letter-spacing:-0.27px">BALANCES</div>
<div class="btn" style="left:1824px;top:523px;width:80px;height:24px;line-height:23px;padding-left:26px"><svg width="11" height="13" viewBox="0 0 11 13" style="left:10px;top:5px"><path fill="none" stroke="#fff" stroke-width="1.400" d="M1 .7h6l3 3v8.600H1z"/><path stroke="#fff" stroke-width="1.100" d="M3 6.500h5M3 9h5M5.500 5v5.500"/></svg>LEDGER</div>
<table class="g bl" style="left:964px;top:550px;width:947px;"><colgroup><col style="width:189px"><col style="width:94px"><col style="width:94px"><col style="width:94px"><col style="width:94px"><col style="width:94px"><col style="width:94px"><col style="width:94px"><col style="width:100px"></colgroup><tr class="h" style="height:25px"><th style="padding-left:8px">Member</th><th class="r" style="padding-right:9px">Current</th><th class="r" style="padding-right:9px">Over 30</th><th class="r" style="padding-right:9px">Over 60</th><th class="r" style="padding-right:9px">Over 90</th><th class="r" style="padding-right:9px">Over 120</th><th class="r" style="padding-right:9px">Balance</th><th class="r" style="padding-right:9px">Est Pat</th><th class="r" style="padding-right:15px">Est Ins</th></tr><tr class="w" style="height:26px"><td class="lk" style="padding-left:10px">Account Balance</td><td class="r" style="padding-right:8px">$0.00</td><td class="r" style="padding-right:8px">$0.00</td><td class="r" style="padding-right:8px">$0.00</td><td class="r" style="padding-right:8px">$0.00</td><td class="r" style="padding-right:8px">$28,806.30</td><td class="r lk" style="padding-right:8px">$28,806.30</td><td class="r lk" style="padding-right:8px">$24,863.50</td><td class="r lk" style="padding-right:14px">$3,942.80</td></tr><tr class="a" style="height:26px"><td class="lk" style="padding-left:10px">Cooper, Cloey</td><td class="r" style="padding-right:8px">$0.00</td><td class="r" style="padding-right:8px">$0.00</td><td class="r" style="padding-right:8px">$0.00</td><td class="r" style="padding-right:8px">$0.00</td><td class="r" style="padding-right:8px">$23,593.30</td><td class="r lk" style="padding-right:8px">$23,593.30</td><td class="r lk" style="padding-right:8px">$<i class="o">1</i>9,820.70</td><td class="r lk" style="padding-right:14px">$3,772.60</td></tr><tr class="w" style="height:26px"><td class="lk" style="padding-left:10px">Cooper, Shelly</td><td class="r" style="padding-right:8px">$0.00</td><td class="r" style="padding-right:8px">$0.00</td><td class="r" style="padding-right:8px">$0.00</td><td class="r" style="padding-right:8px">$0.00</td><td class="r" style="padding-right:8px">$94.20</td><td class="r lk" style="padding-right:8px">$94.20</td><td class="r lk" style="padding-right:8px">$0.00</td><td class="r lk" style="padding-right:14px">$94.20</td></tr></table>
<div class="sb" style="left:1905px;top:577px;height:76px;width:6px"></div>
<div class="sec" style="left:6.5px;top:665.5px;letter-spacing:-0.6px">RECALLS</div>
<div class="btn" style="left:891px;top:664px;width:63px;height:24px;line-height:23px;padding-left:28px"><svg width="12" height="12" viewBox="0 0 12 12" style="left:10px"><path fill="#fff" d="M8.500.5l3 3-1.400 1.400-3-3zM6.300 2.700l3 3L3.500 11.500.3 11.700.5 8.500z"/></svg>EDIT</div>
<table class="g rc" style="left:6px;top:691px;width:948px;"><colgroup><col style="width:114px"><col style="width:123px"><col style="width:142px"><col style="width:283px"><col style="width:142px"><col style="width:144px"></colgroup><tr class="h" style="height:24px"><th style="padding-left:7px">Code</th><th style="padding-left:7px">Interval</th><th style="padding-left:7px">Recall Date</th><th style="padding-left:7px">Reason</th><th style="padding-left:7px">Sch Date</th><th style="padding-left:7px">Sch Time</th></tr><tr class="w" style="height:26px"><td style="padding-left:10px">D02<i class="o">1</i>0</td><td>3 Y + <i class="o">1</i>D</td><td>07/<i class="o">1</i>6/2024</td><td>Intraoral Complete Incl Bwings</td><td>-</td><td>-</td></tr><tr class="a" style="height:26px"><td style="padding-left:10px">D<i class="o">1</i><i class="o">1</i><i class="o">1</i>0</td><td>4 M + <i class="o">1</i>D</td><td>08/05/2022</td><td>Prophylaxis - Adult</td><td>-</td><td>-</td></tr><tr class="w" style="height:24px"><td style="padding-left:10px">D0<i class="o">1</i>20</td><td>6 M + <i class="o">1</i>D</td><td>05/<i class="o">1</i>6/2022</td><td>Periodic Oral Evaluation</td><td>-</td><td>-</td></tr></table>
<div class="sb" style="left:945px;top:716px;height:74px;width:7px"></div>
<div class="sec" style="left:964.5px;top:665.5px">BILLING</div>
<table class="g bi" style="left:964px;top:691px;width:469px;"><colgroup><col style="width:187px"><col style="width:141px"><col style="width:141px"></colgroup><tr class="h" style="height:24px"><th></th><th class="r" style="padding-right:8px">Amount</th><th style="padding-left:8px">Date</th></tr><tr class="w" style="height:26px"><td>Last Pat Pay</td><td class="r" style="padding-right:9px">$<i class="o">1</i><i class="o">1</i>8.00</td><td style="padding-left:8px"><i class="o">1</i>2/29/2020</td></tr><tr class="a" style="height:26px"><td>Last Ins Pay</td><td class="r" style="padding-right:9px">$826.80</td><td style="padding-left:8px">03/2<i class="o">1</i>/2022</td></tr><tr class="w" style="height:24px"><td>Last Statement</td><td class="r" style="padding-right:9px">$2,983.70</td><td style="padding-left:8px"><i class="o">1</i>0/07/20<i class="o">1</i>9</td></tr></table>
<div class="sec" style="left:1443px;top:665.5px;letter-spacing:-0.52px">CONTRACT</div>
<div class="btn" style="left:1674px;top:664px;width:106px;height:24px;line-height:23px;padding-left:28px"><svg width="12" height="12" viewBox="0 0 12 12" style="left:10px"><path fill="#fff" d="M8.500.5l3 3-1.400 1.400-3-3zM6.300 2.700l3 3L3.500 11.500.3 11.700.5 8.500z"/></svg>EDIT ORTHO</div>
<div class="btn" style="left:1785px;top:664px;width:119px;height:24px;line-height:23px;padding-left:28px"><svg width="12" height="12" viewBox="0 0 12 12" style="left:10px"><path fill="#fff" d="M8.500.5l3 3-1.400 1.400-3-3zM6.300 2.700l3 3L3.500 11.500.3 11.700.5 8.500z"/></svg>EDIT REGULAR</div>
<table class="g ct" style="left:1443px;top:691px;width:469px;"><colgroup><col style="width:187px"><col style="width:141px"><col style="width:141px"></colgroup><tr class="h" style="height:24px"><th></th><th style="padding-left:8px">Reg</th><th style="padding-left:8px">Ortho</th></tr><tr class="w" style="height:26px"><td>Rem. Amount</td><td>$<i class="o">1</i>,<i class="o">1</i>67.80</td><td>$0.00</td></tr><tr class="a" style="height:26px"><td>Rem. Payments</td><td><i class="o">1</i>0</td><td>0</td></tr><tr class="w" style="height:24px"><td>Next Pay Date</td><td>0<i class="o">1</i>/<i class="o">1</i>0/2022</td><td>-</td></tr></table>
</div>
</div>
<div id="footer" class="abs"><div class="ln"></div><p>© 2022 Planet DDS | <a>Privacy Policy</a> |  Page Time Left (hh:mm:ss) 1:59:1</p></div>
</body>
</html>
